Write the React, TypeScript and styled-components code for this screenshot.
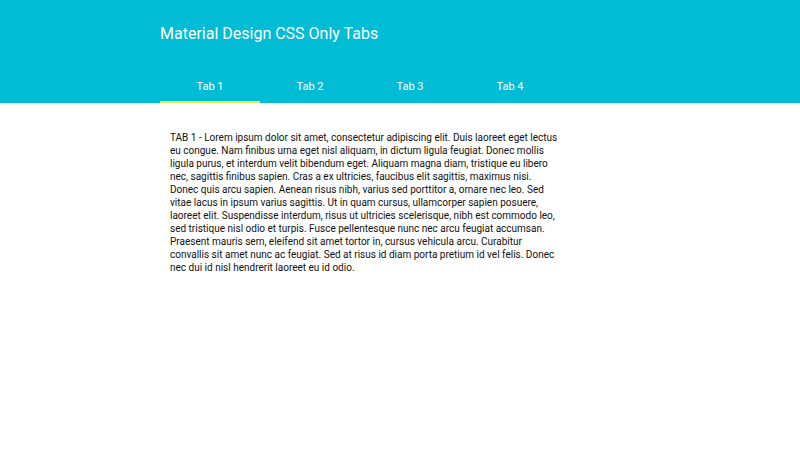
import { useState } from 'react'
import styled, { createGlobalStyle } from 'styled-components'

const GlobalStyle = createGlobalStyle`
  html, body {
    margin: 0;
    padding: 0;
    background: #fff;
    font-family: Roboto, "Liberation Sans", sans-serif;
  }
`

const Header = styled.header`
  background: #00bcd4;
  height: 103px;
  display: flex;
  flex-direction: column;
  justify-content: space-between;
`

const Inner = styled.div`
  width: 400px;
  margin-left: 160px;
`

const Title = styled.h1`
  margin: 0;
  padding-top: 24px;
  font-size: 16px;
  font-weight: 400;
  color: #fff;
`

const TabBar = styled.nav`
  display: flex;
`

const Tab = styled.button<{ $active: boolean }>`
  width: 100px;
  height: 36px;
  padding: 4px 0 0;
  border: 0;
  border-bottom: 2px solid ${(p) => (p.$active ? '#e2ec4e' : 'transparent')};
  background: transparent;
  color: #fff;
  font-family: inherit;
  font-size: 11px;
  cursor: pointer;
`

const Content = styled.div`
  width: 390px;
  padding: 28px 0 0 10px;
  font-size: 10px;
  line-height: 13px;
  color: #111;
`

const text =
  'Lorem ipsum dolor sit amet, consectetur adipiscing elit. Duis laoreet eget lectus eu congue. Nam finibus urna eget nisl aliquam, in dictum ligula feugiat. Donec mollis ligula purus, et interdum velit bibendum eget. Aliquam magna diam, tristique eu libero nec, sagittis finibus sapien. Cras a ex ultricies, faucibus elit sagittis, maximus nisi. Donec quis arcu sapien. Aenean risus nibh, varius sed porttitor a, ornare nec leo. Sed vitae lacus in ipsum varius sagittis. Ut in quam cursus, ullamcorper sapien posuere, laoreet elit. Suspendisse interdum, risus ut ultricies scelerisque, nibh est commodo leo, sed tristique nisl odio et turpis. Fusce pellentesque nunc nec arcu feugiat accumsan. Praesent mauris sem, eleifend sit amet tortor in, cursus vehicula arcu. Curabitur convallis sit amet nunc ac feugiat. Sed at risus id diam porta pretium id vel felis. Donec nec dui id nisl hendrerit laoreet eu id odio.'

export default function App() {
  const [active, setActive] = useState(0)
  return (
    <>
      <GlobalStyle />
      <Header>
        <Inner>
          <Title>Material Design CSS Only Tabs</Title>
        </Inner>
        <Inner>
          <TabBar>
            {[1, 2, 3, 4].map((n, i) => (
              <Tab key={n} $active={active === i} onClick={() => setActive(i)}>
                Tab {n}
              </Tab>
            ))}
          </TabBar>
        </Inner>
      </Header>
      <Inner>
        <Content>
          TAB {active + 1} - {text}
        </Content>
      </Inner>
    </>
  )
}
